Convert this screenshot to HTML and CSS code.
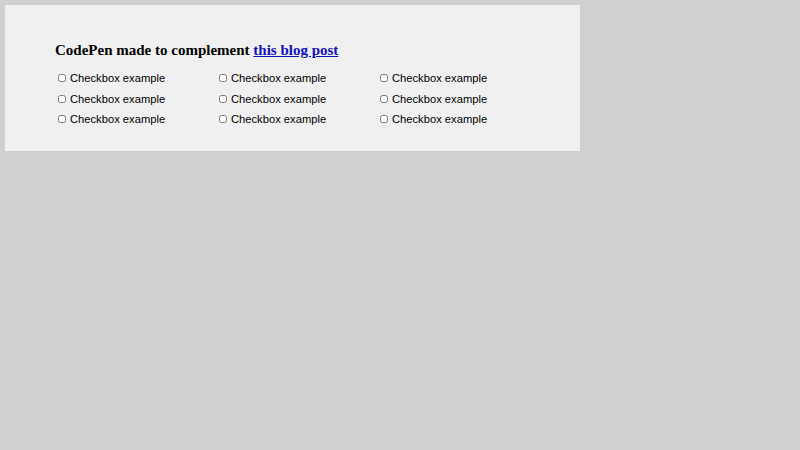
FILE: index.html
```html
<!DOCTYPE html>
<html>
<head>
<meta charset="utf-8">
<link rel="stylesheet" href="styles.css">
</head>
<body>
<div class="panel">
  <h3 class="title">CodePen made to complement <a href="#">this blog post</a></h3>
  <div class="grid">
    <label class="item"><input type="checkbox"> Checkbox example</label>
    <label class="item"><input type="checkbox"> Checkbox example</label>
    <label class="item"><input type="checkbox"> Checkbox example</label>
    <label class="item"><input type="checkbox"> Checkbox example</label>
    <label class="item"><input type="checkbox"> Checkbox example</label>
    <label class="item"><input type="checkbox"> Checkbox example</label>
    <label class="item"><input type="checkbox"> Checkbox example</label>
    <label class="item"><input type="checkbox"> Checkbox example</label>
    <label class="item"><input type="checkbox"> Checkbox example</label>
  </div>
</div>
</body>
</html>
```
FILE: styles.css
```css
html, body {
  margin: 0;
  background: #d0d0d0;
}
body {
  padding: 5px;
}
.panel {
  width: 575px;
  height: 146px;
  box-sizing: border-box;
  background: #f0f0f0;
  padding: 37px 50px 0;
}
.title {
  font-family: "Liberation Serif", serif;
  font-size: 15px;
  line-height: 17px;
  font-weight: bold;
  margin: 0 0 9px 0;
  color: #000;
}
.title a {
  color: #1111bb;
}
.grid {
  display: grid;
  grid-template-columns: 161px 161px 161px;
}
.item {
  font-family: "Liberation Sans", sans-serif;
  font-size: 11.2px;
  height: 20.5px;
  display: flex;
  align-items: center;
  color: #000;
}
.item input {
  margin: 0 4px 0 3px;
  width: 8px;
  height: 8px;
}
```
